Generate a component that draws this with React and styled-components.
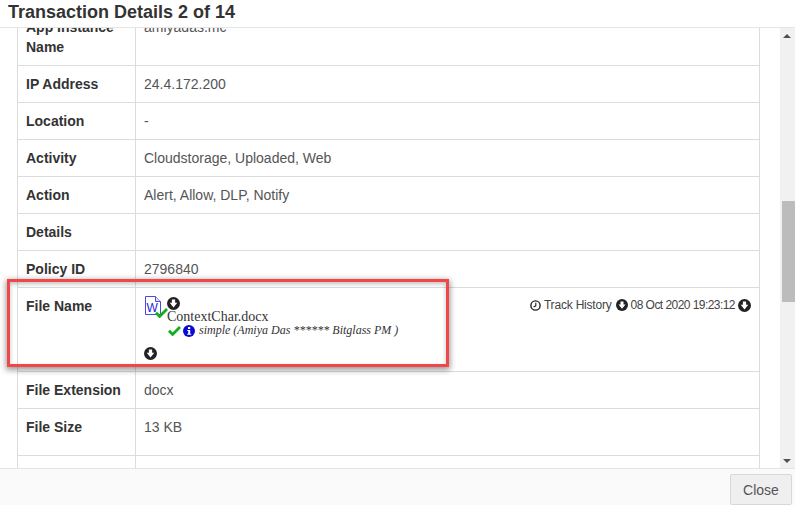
import styled, { createGlobalStyle } from 'styled-components';

const GlobalStyle = createGlobalStyle`
	html, body {
		margin: 0;
		height: 100%;
		background: #fff;
	}
	body {
		font-family: 'Liberation Sans', Arial, sans-serif;
		font-size: 14px;
		line-height: 20px;
		color: #333;
		overflow: hidden;
	}
`;

const Modal = styled.div`
	position: relative;
	display: flex;
	flex-direction: column;
	width: 795px;
	height: 505px;
	overflow: hidden;
`;

const Header = styled.header`
	flex: 0 0 28px;
	box-sizing: border-box;
	height: 28px;
	padding: 0 8px;
	border-bottom: 1px solid #e5e5e5;
	background: #fff;
`;

const Title = styled.h4`
	margin: 0;
	font-size: 18px;
	line-height: 24px;
	font-weight: 700;
	color: #333;
`;

const Body = styled.div`
	position: relative;
	flex: 1;
	overflow: hidden;
`;

const Table = styled.table`
	width: 743px;
	margin: -20px 0 0 17px;
	border-collapse: collapse;
	table-layout: fixed;
`;

const Label = styled.th`
	width: 101px;
	padding: 8px;
	border: 1px solid #dcdcdc;
	text-align: left;
	vertical-align: top;
	font-weight: 700;
`;

const Value = styled.td`
	padding: 8px;
	border: 1px solid #dcdcdc;
	vertical-align: top;
	color: #555;
	height: ${p => p.$height || 20}px;
`;

const FileCell = styled.div`
	display: flex;
	justify-content: space-between;
	align-items: flex-start;
	height: 67px;
	color: #333;
`;

const FileMain = styled.div`
	display: flex;
	flex-direction: column;
	align-items: flex-start;
`;

const FileTop = styled.div`
	display: flex;
	align-items: flex-start;
	height: 51px;
	margin-left: 1px;
`;

const DocWrap = styled.div`
	position: relative;
	width: 22px;
	height: 20px;
`;

const DocBadge = styled.span`
	position: absolute;
	left: 10px;
	top: 11px;
	display: flex;
`;

const FileInfo = styled.div`
	display: flex;
	flex-direction: column;
	align-items: flex-start;
	padding-top: 1px;
`;

const FileTitle = styled.div`
	font-family: 'Liberation Serif', 'Times New Roman', serif;
	font-size: 14px;
	line-height: 14px;
`;

const PolicyLine = styled.div`
	display: flex;
	align-items: center;
	gap: 2px;
	height: 13px;
	margin-left: 1px;
`;

const PolicyText = styled.em`
	font-family: 'Liberation Serif', 'Times New Roman', serif;
	font-size: 12px;
	line-height: 13px;
	margin-left: 2px;
`;

const FileMeta = styled.div`
	display: flex;
	align-items: center;
	gap: 3px;
	font-size: 12px;
	line-height: 20px;
	margin-top: -1px;
	color: #444;
`;

const MetaText = styled.span`
	letter-spacing: ${p => p.$spacing || 0}px;
	margin-right: ${p => p.$gap || 0}px;
`;

const Highlight = styled.div`
	position: absolute;
	left: 7px;
	top: 251px;
	width: 442px;
	height: 88px;
	box-sizing: border-box;
	border: 3px solid #f04848;
	box-shadow: 0 2px 6px 1px rgba(0, 0, 0, 0.4), inset 0 2px 4px rgba(0, 0, 0, 0.25);
	pointer-events: none;
`;

const Scrollbar = styled.div`
	position: absolute;
	top: 0;
	right: 0;
	bottom: 0;
	width: 15px;
	background: #f1f1f1;
`;

const ScrollThumb = styled.div`
	position: absolute;
	left: 2px;
	right: 0;
	top: 173px;
	height: 101px;
	background: #bcbcbc;
`;

const ScrollArrow = styled.span`
	position: absolute;
	left: 3px;
	${p => (p.$down ? 'bottom: 5px;' : 'top: 6px;')}
	width: 0;
	height: 0;
	border-left: 4px solid transparent;
	border-right: 4px solid transparent;
	${p => (p.$down ? 'border-top: 4px solid #505050;' : 'border-bottom: 4px solid #505050;')}
`;

const Footer = styled.footer`
	flex: 0 0 37px;
	box-sizing: border-box;
	display: flex;
	justify-content: flex-end;
	padding: 5px 3px 0 0;
	border-top: 1px solid #e5e5e5;
	background: #fafafa;
`;

const CloseButton = styled.button`
	box-sizing: border-box;
	width: 62px;
	height: 31px;
	padding: 0;
	border: 1px solid #d8d8d8;
	border-radius: 2px;
	background: #efefef;
	font-family: 'Liberation Sans', Arial, sans-serif;
	font-size: 14px;
	color: #555;
`;

function ArrowDown({ size = 13 }) {
	return (
		<svg width={size} height={size} viewBox='0 0 12 12'>
			<circle cx='6' cy='6' r='6' fill='#222' />
			<path d='M4.500 2.400h3v3h2L6 9.700 2.500 5.400h2z' fill='#fff' />
		</svg>
	);
}

function Check({ size = 13 }) {
	return (
		<svg width={size} height={size * 0.85} viewBox='0 0 13 11'>
			<path d='M1 5.800l3.600 3.600L12 2' fill='none' stroke='#0fae1c' strokeWidth='2.800' />
		</svg>
	);
}

function Info() {
	return (
		<svg width='12' height='12' viewBox='0 0 12 12'>
			<circle cx='6' cy='6' r='6' fill='#0a0ad0' />
			<rect x='5' y='2' width='2.200' height='2' fill='#fff' />
			<path d='M4.200 5h3v3.800h1v1H4.200v-1h1V6h-1z' fill='#fff' />
		</svg>
	);
}

function Clock() {
	return (
		<svg width='11' height='11' viewBox='0 0 11 11'>
			<circle cx='5.500' cy='5.500' r='4.600' fill='none' stroke='#222' strokeWidth='1.400' />
			<path d='M5.800 2.800v3L3.600 7' fill='none' stroke='#222' strokeWidth='1.100' />
		</svg>
	);
}

function DocIcon() {
	return (
		<svg width='16' height='19' viewBox='0 0 16 19'>
			<path d='M.5.500h10l5 5v13H.5z' fill='#fff' stroke='#4a4ae0' />
			<path d='M10.500.500v5h5' fill='#dfe0fb' stroke='#4a4ae0' />
			<text x='1.500' y='16' fontFamily='Liberation Sans, sans-serif' fontSize='12' fill='#1f1fd8'>W</text>
		</svg>
	);
}

const rows = [
	{ label: 'App Instance Name', value: 'amiyadas.mc' },
	{ label: 'IP Address', value: '24.4.172.200' },
	{ label: 'Location', value: '-' },
	{ label: 'Activity', value: 'Cloudstorage, Uploaded, Web' },
	{ label: 'Action', value: 'Alert, Allow, DLP, Notify' },
	{ label: 'Details', value: '' },
	{ label: 'Policy ID', value: '2796840' },
];

function App() {
	return (
		<Modal>
			<GlobalStyle />
			<Header>
				<Title>Transaction Details 2 of 14</Title>
			</Header>
			<Body>
				<Table>
					<tbody>
						{rows.map(row => (
							<tr key={row.label}>
								<Label>{row.label}</Label>
								<Value>{row.value}</Value>
							</tr>
						))}
						<tr>
							<Label>File Name</Label>
							<Value>
								<FileCell>
									<FileMain>
										<FileTop>
											<DocWrap>
												<DocIcon />
												<DocBadge>
													<Check />
												</DocBadge>
											</DocWrap>
											<FileInfo>
												<ArrowDown />
												<FileTitle>ContextChar.docx</FileTitle>
												<PolicyLine>
													<Check />
													<Info />
													<PolicyText>simple (Amiya Das ****** Bitglass PM )</PolicyText>
												</PolicyLine>
											</FileInfo>
										</FileTop>
										<ArrowDown />
									</FileMain>
									<FileMeta>
										<Clock />
										<MetaText $spacing={-0.2} $gap={1}>Track History</MetaText>
										<ArrowDown size={12} />
										<MetaText $spacing={-0.55}>08 Oct 2020 19:23:12</MetaText>
										<ArrowDown />
									</FileMeta>
								</FileCell>
							</Value>
						</tr>
						<tr>
							<Label>File Extension</Label>
							<Value>docx</Value>
						</tr>
						<tr>
							<Label>File Size</Label>
							<Value $height={30}>13 KB</Value>
						</tr>
						<tr>
							<Label />
							<Value $height={30} />
						</tr>
					</tbody>
				</Table>
				<Highlight />
				<Scrollbar>
					<ScrollArrow />
					<ScrollThumb />
					<ScrollArrow $down />
				</Scrollbar>
			</Body>
			<Footer>
				<CloseButton>Close</CloseButton>
			</Footer>
		</Modal>
	);
}

export default App;
